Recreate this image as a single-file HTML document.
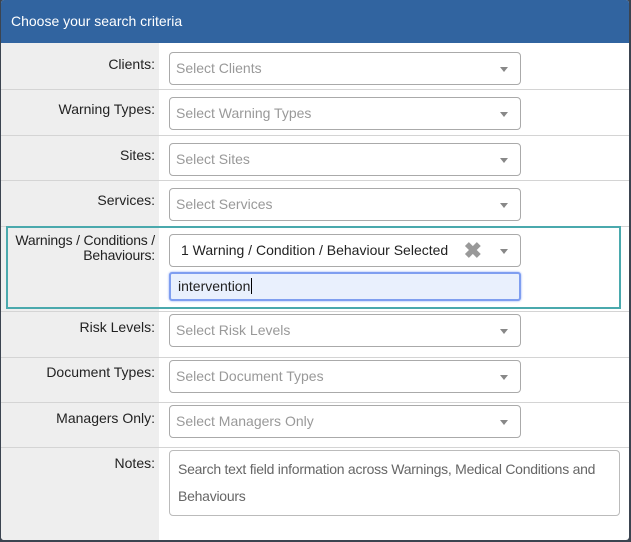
<!DOCTYPE html>
<html><head><style>
body{margin:0;width:631px;height:542px;overflow:hidden;background:#3b4450;font-family:"Liberation Sans",sans-serif;}
.panel{position:absolute;left:1px;top:0;width:628px;height:540px;background:#fff;border-radius:3px;overflow:hidden;}
.hdr{position:absolute;left:0;top:0;width:628px;height:43px;background:#3164a0;color:#fff;font-size:14px;line-height:43px;padding-left:10px;box-sizing:border-box;}
.lc{position:absolute;left:0;top:43px;width:158px;height:497px;background:#eeeeee;}
.sep{position:absolute;left:0;width:628px;height:1px;background:#d4d4d4;}
.lab{position:absolute;right:474px;font-size:14px;color:#222;text-align:right;line-height:15px;}
.sel{position:absolute;left:168px;width:352px;height:33px;border:1px solid #aaa;border-radius:4px;box-sizing:border-box;background:#fff;font-size:14px;color:#999;line-height:31px;padding-left:6px;}
.sel:after{content:"";position:absolute;right:12px;top:14px;border:4px solid transparent;border-top:5px solid #888;border-bottom:0;}
</style></head><body>
<div class="panel">
<div class="hdr">Choose your search criteria</div>
<div class="lc"></div>
<div class="sep" style="top:89px"></div>
<div class="sep" style="top:135px"></div>
<div class="sep" style="top:180px"></div>
<div class="sep" style="top:226px"></div>
<div class="sep" style="top:311px"></div>
<div class="sep" style="top:357px"></div>
<div class="sep" style="top:402px"></div>
<div class="sep" style="top:447px"></div>

<div class="lab" style="top:57px">Clients:</div>
<div class="sel" style="top:52px">Select Clients</div>
<div class="lab" style="top:102px">Warning Types:</div>
<div class="sel" style="top:97px">Select Warning Types</div>
<div class="lab" style="top:148px">Sites:</div>
<div class="sel" style="top:143px">Select Sites</div>
<div class="lab" style="top:193px">Services:</div>
<div class="sel" style="top:188px">Select Services</div>

<div class="lab" style="top:233px;letter-spacing:-0.2px">Warnings / Conditions /<br>Behaviours:</div>
<div class="sel" style="top:234px;color:#222;padding-left:11px">1 Warning / Condition / Behaviour Selected<span style="position:absolute;right:38px;top:0;color:#999;font-size:22px;font-weight:bold">✖</span></div>
<div style="position:absolute;left:168px;top:272px;width:352px;height:29px;border:2px solid #7f9ef0;border-radius:3px;box-sizing:border-box;background:#e9f0fd;font-size:14px;color:#222;line-height:25px;padding-left:7px;box-shadow:0 0 2px #8fa8f5;">intervention<span style="border-left:1px solid #000;margin-left:1px"></span></div>
<div style="position:absolute;left:5px;top:226px;width:615px;height:83px;border:2px solid #4aa9ad;box-sizing:border-box;"></div>

<div class="lab" style="top:320px">Risk Levels:</div>
<div class="sel" style="top:314px">Select Risk Levels</div>
<div class="lab" style="top:365px">Document Types:</div>
<div class="sel" style="top:360px">Select Document Types</div>
<div class="lab" style="top:411px">Managers Only:</div>
<div class="sel" style="top:405px">Select Managers Only</div>
<div class="lab" style="top:456px">Notes:</div>
<div style="position:absolute;left:168px;top:450px;width:451px;height:66px;border:1px solid #bbb;border-radius:4px;box-sizing:border-box;font-size:14px;letter-spacing:-0.25px;color:#666;line-height:27px;padding:5px 4px 5px 8px;">Search text field information across Warnings, Medical Conditions and Behaviours</div>
</div>
</body></html>
